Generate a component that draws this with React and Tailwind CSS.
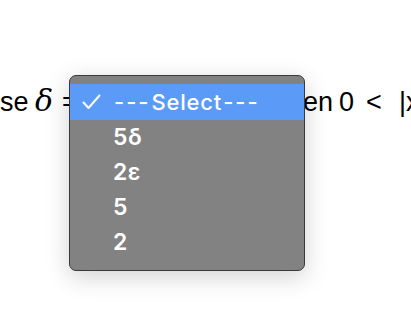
import React from 'react'

const options = ['5δ', '2ε', '5', '2']

export default function App() {
    return (
        <div className="relative w-[411px] h-[326px] bg-white overflow-hidden">
            {/* sentence behind the open select */}
            <div
                className="flex items-baseline whitespace-nowrap pt-[84px] text-[27px] leading-[34px] text-black"
                style={{ fontFamily: '"Liberation Sans", Arial, sans-serif' }}
            >
                <span className="w-[35px] shrink-0">se</span>
                <span className="w-[27px] shrink-0 italic text-[30px]" style={{ fontFamily: '"DejaVu Serif", "Liberation Serif", serif' }}>δ</span>
                <span className="w-[241px] shrink-0">=</span>
                <span className="w-[36px] shrink-0">en</span>
                <span className="w-[27px] shrink-0">0</span>
                <span className="w-[33px] shrink-0">&lt;</span>
                <span className="shrink-0">|x</span>
            </div>

            <div
                className="absolute left-[69px] top-[75px] w-[236px] h-[196px] rounded-[7px] border border-[#3a3a3a] bg-[#828282] py-[8px] shadow-[0_6px_24px_rgba(0,0,0,0.18)]"
                style={{ fontFamily: 'Inter, "Noto Sans", sans-serif' }}
            >
                <div className="flex items-center h-[36px] bg-[#5b9bf7] text-white text-[22px] font-medium tracking-[0.8px]">
                    <span className="w-[44px] pl-[12px] flex items-center">
                        <svg width="19" height="16" viewBox="0 0 19 16" fill="none">
                            <path d="M1.5 8.5 L6.5 14 L17.5 1.5" stroke="white" strokeWidth="2" strokeLinecap="round" strokeLinejoin="round" />
                        </svg>
                    </span>
                    <span className="tracking-[2px]">---</span>
                    <span className="ml-[1px]">Select</span>
                    <span className="ml-[1px] tracking-[2px]">---</span>
                </div>
                {options.map(o => (
                    <div key={o} className="flex items-center h-[35px] pl-[43px] text-white text-[23px] font-semibold tracking-[0.5px]">
                        {o}
                    </div>
                ))}
            </div>
        </div>
    )
}
